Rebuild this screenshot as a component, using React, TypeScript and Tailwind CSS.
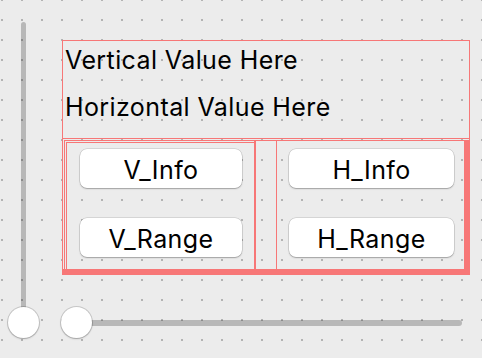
import React from "react";

const Btn = ({ label, w }: { label: string; w: string }) => (
  <div
    className={`${w} h-[39px] pt-[4px] bg-white rounded-[7px] flex items-center justify-center text-[25px] leading-[29px] tracking-[0.4px] text-black shadow-[0_0_0_0.5px_rgba(0,0,0,0.18),0_1px_1.5px_rgba(0,0,0,0.25)]`}
  >
    {label}
  </div>
);

export default function App() {
  return (
    <div
      className="relative w-[482px] h-[358px] overflow-hidden bg-[#ececec]"
      style={{ fontFamily: "Inter, 'Liberation Sans', sans-serif" }}
    >
      <svg className="absolute inset-0" width="482" height="358">
        <defs>
          <pattern id="dots" x="1" y="-1" width="20" height="20" patternUnits="userSpaceOnUse">
            <rect x="0" y="0" width="2" height="2" fill="#b3b3b3" />
          </pattern>
        </defs>
        <rect width="482" height="358" fill="url(#dots)" />
      </svg>

      <div className="relative flex flex-row">
        {/* vertical slider */}
        <div className="ml-[8px] mt-[22px] w-[31px] flex flex-col items-center">
          <div className="w-[5px] h-[293px] rounded-t-full bg-black/[0.22]" />
          <div className="relative z-10 -mt-[8px] w-[31px] h-[31px] rounded-full bg-white shadow-[0_0_0_1px_rgba(0,0,0,0.15),0_1px_2px_rgba(0,0,0,0.2)]" />
        </div>

        {/* main column */}
        <div className="ml-[23px] mt-[40px] flex flex-col">
          <div className="w-[408px] h-[235px] border border-b-[6px] border-[#f77777] flex flex-col">
            <div className="h-[97px] pl-[2px] pt-[5px] text-[25px] leading-[29px] tracking-[0.4px] text-black">
              <div>Vertical Value Here</div>
              <div className="mt-[18px]">Horizontal Value Here</div>
            </div>
            <div className="flex-1 flex flex-row border-t border-[#f77777]">
              <div className="ml-px mt-px w-[191px] border border-b-0 border-[#f77777] flex">
                <div className="ml-px mt-px flex-1 border border-b-0 border-r-0 border-[#f77777] pl-[13px] pt-[6px] flex flex-col gap-[30px]">
                  <Btn label="V_Info" w="w-[162px]" />
                  <Btn label="V_Range" w="w-[162px]" />
                </div>
              </div>
              <div className="mt-px w-[22px] border border-b-0 border-[#f77777]" />
              <div className="mt-px flex-1 border-t border-r-[5px] border-[#f77777] pl-[12px] pt-[8px] flex flex-col gap-[30px]">
                <Btn label="H_Info" w="w-[165px]" />
                <Btn label="H_Range" w="w-[165px]" />
              </div>
            </div>
          </div>

          {/* horizontal slider */}
          <div className="mt-[32px] -ml-[1px] flex flex-row items-center">
            <div className="relative z-10 w-[31px] h-[31px] rounded-full bg-white shadow-[0_0_0_1px_rgba(0,0,0,0.15),0_1px_2px_rgba(0,0,0,0.2)]" />
            <div className="-ml-[8px] w-[378px] h-[6px] rounded-r-full bg-black/[0.22]" />
          </div>
        </div>
      </div>
    </div>
  );
}
